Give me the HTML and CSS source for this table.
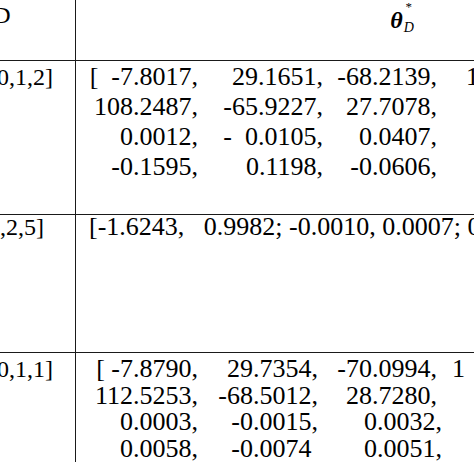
FILE: index.html
```html
<!DOCTYPE html>
<html>
<head>
<meta charset="utf-8">
<link rel="stylesheet" href="styles.css">
</head>
<body>
<div class="tbl">
  <div class="row hdr">
    <div class="c1 hc1"><span>θ, D</span></div>
    <div class="c2 hc2"><span class="theta">θ</span><span class="scr"><span class="star">*</span><span class="subd">D</span></span></div>
  </div>
  <div class="row r1">
    <div class="c1"><span class="t">[0,0,1,2]</span></div>
    <div class="c2">
      <div class="grid g1">
        <span>[  -7.8017,</span><span>29.1651,</span><span>-68.2139,</span><span class="d">125.3081,</span>
        <span>108.2487,</span><span>-65.9227,</span><span>27.7078,</span><span class="d"></span>
        <span>0.0012,</span><span>-  0.0105,</span><span>0.0407,</span><span class="d"></span>
        <span>-0.1595,</span><span>0.1198,</span><span>-0.0606,</span><span class="d"></span>
      </div>
    </div>
  </div>
  <div class="row r2">
    <div class="c1"><span class="t">[1,2,5]</span></div>
    <div class="c2"><div class="line2">[-1.6243,   0.9982; -0.0010, 0.0007; 0.0000]</div></div>
  </div>
  <div class="row r3">
    <div class="c1"><span class="t">[0,0,1,1]</span></div>
    <div class="c2">
      <div class="grid g3">
        <span>[ -7.8790,</span><span>29.7354,</span><span>-70.0994,</span><span class="d">1</span>
        <span>112.5253,</span><span>-68.5012,</span><span>28.7280,</span><span class="d"></span>
        <span>0.0003,</span><span>-0.0015,</span><span class="nudge">0.0032,</span><span class="d"></span>
        <span>0.0058,</span><span>-0.0074 </span><span class="nudge">0.0051,</span><span class="d"></span>
      </div>
    </div>
  </div>
</div>
</body>
</html>
```
FILE: styles.css
```css
html, body {
  margin: 0;
  padding: 0;
  overflow: hidden;
  background: #fff;
}
body {
  width: 474px;
  height: 474px;
  font-family: "Liberation Serif", "Times New Roman", serif;
  color: #000;
}
.tbl {
  margin-left: -51px;
  width: 779px;
}
.row {
  display: flex;
  border-bottom: 1.5px solid #1a1a1a;
}
.c1 {
  flex: none;
  width: 127px;
  box-sizing: border-box;
  border-right: 1.5px solid #1a1a1a;
  text-align: center;
  font-size: 24px;
}
.c2 {
  flex: none;
  width: 652px;
  font-size: 26px;
}
.t, .grid span, .line2 { white-space: pre; }

/* header */
.hdr { height: 61px; box-sizing: border-box; }
.c1.hc1 {
  text-align: right;
  padding: 3px 64.5px 0 0;
  line-height: 24px;
}
.hc2 {
  display: flex;
  justify-content: center;
  align-items: flex-start;
}
.theta {
  font-weight: bold;
  font-style: italic;
  font-size: 24px;
  line-height: 24px;
  margin-top: 8px;
}
.scr {
  display: flex;
  flex-direction: column;
  align-items: center;
  margin-left: 1px;
}
.star {
  font-size: 13px;
  line-height: 13px;
}
.subd {
  font-style: italic;
  font-size: 14px;
  line-height: 14px;
  margin-top: 8px;
}

/* body rows */
.grid {
  display: grid;
  justify-items: end;
}
.grid .d { justify-self: start; }
.g1 { grid-template-columns: 122px 125px 114px auto; line-height: 30px; }
.g1 .d { padding-left: 29px; }
.g3 { grid-template-columns: 122px 120px 119px auto; line-height: 26.5px; }
.g3 .d { padding-left: 15px; }
.nudge { margin-right: -5px; }

.r1 > div { padding: 1px 0 32px; line-height: 30px; }
.r2 > div { padding: 0.5px 0 114px; line-height: 22px; }
.line2 { padding-left: 13px; }
.r3 > div { padding: 3.5px 0 0; line-height: 26.5px; }
.r3 { border-bottom: none; }
```
